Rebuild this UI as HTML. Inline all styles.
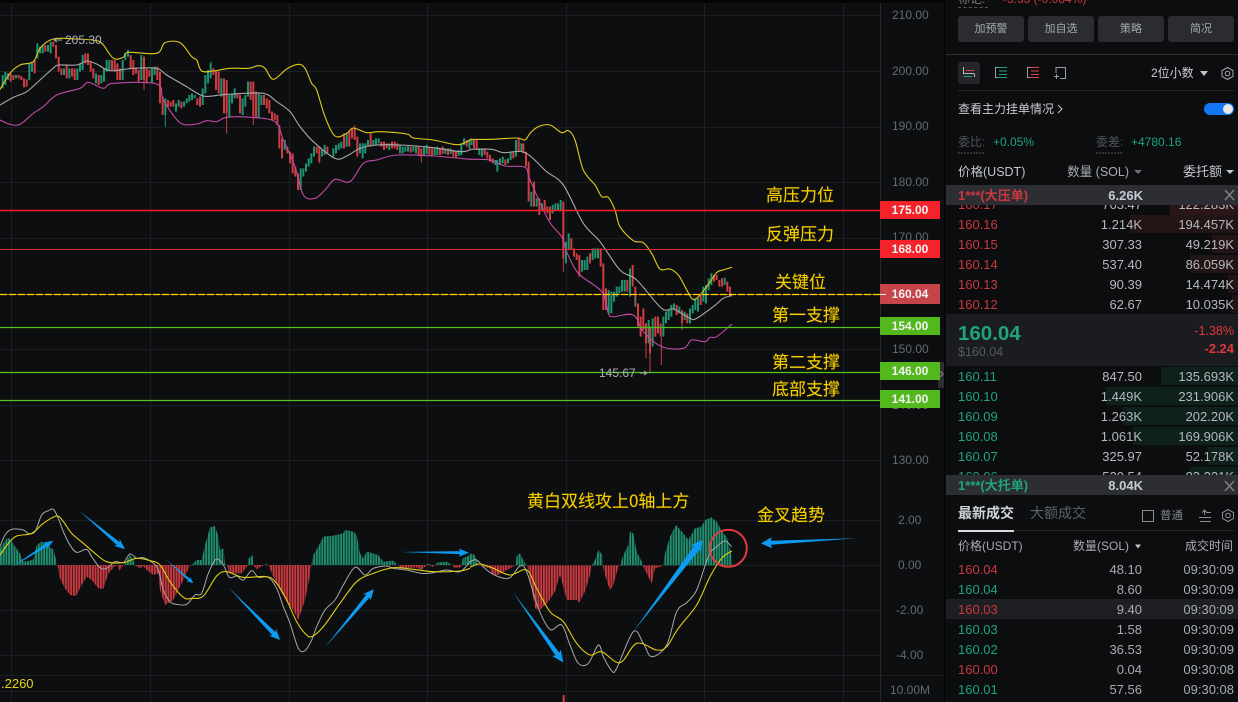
<!DOCTYPE html>
<html lang="zh">
<head>
<meta charset="utf-8">
<title>SOL/USDT</title>
<style>
html,body{margin:0;padding:0;background:#0d0e10;}
body{position:relative;width:1238px;height:702px;overflow:hidden;font-family:"Liberation Sans","Noto Sans CJK SC",sans-serif;}
body>*{filter:blur(.3px);}
svg{position:absolute;left:0;top:0;}
.t{position:absolute;white-space:nowrap;line-height:20px;height:20px;font-size:13px;color:#b5b8bc;}
.a{font-size:12px;color:#626a76;left:892px;}
.l{position:absolute;left:880px;width:60px;height:18px;line-height:18px;text-align:center;font-size:12px;font-weight:bold;color:#f2f2f2;}
.y{position:absolute;white-space:nowrap;font-family:"Noto Sans CJK SC",sans-serif;font-size:17px;line-height:24px;height:24px;color:#f7d000;text-shadow:0 0 1px #5a4a00;}
.b{position:absolute;top:16px;width:66px;height:26px;line-height:27px;background:#2a2c31;border-radius:3px;text-align:center;font-size:11px;color:#a4a8ad;}
.bar{position:absolute;height:18px;}
.sr{background:#231416;}
.gr{background:#0f211c;}
.re{color:#c8393f;}
.gn{color:#1fa37c;}
</style>
</head>
<body>
<svg width="945" height="702" viewBox="0 0 945 702" xmlns="http://www.w3.org/2000/svg">
<defs>
<pattern id="gs" width="8.1" height="10" patternUnits="userSpaceOnUse"><rect width="6" height="10" fill="#1f8f6f"/></pattern>
<pattern id="rs" width="8.1" height="10" patternUnits="userSpaceOnUse"><rect width="6" height="10" fill="#c9393f"/></pattern>
</defs>
<rect width="945" height="702" fill="#0d0e10"/>
<rect width="945" height="3" fill="#050506"/>
<g stroke="#1c1e21" stroke-width="1" fill="none">
<path d="M0 15.500H880M0 71.500H880M0 127.500H880M0 182.500H880M0 238.500H880M0 349.500H880M0 405.500H880M0 460.500H880M0 520.500H880M0 565.500H880M0 610.500H880M0 655.500H880M0 675.500H945M0 691.500H880"/>
<path d="M11.500 3V702M150.500 3V702M289.500 3V702M427.500 3V702M566.500 3V702M704.500 3V702M843.500 3V702"/>
<path d="M880.500 3V702" stroke="#24262a"/>
</g>

<!-- Candles part 1 -->
<g transform="scale(.33333)" fill="none">
<path stroke="#1f9272" stroke-width="6" d="M8 225V265M16 215V255M24 220V240M48 225V235M88 190V240M96 185V215M112 130V175M120 140V160M128 135V160M144 135V155M152 125V160M192 205V225M208 205V235M232 205V240M240 190V215M248 165V210M288 220V250M304 225V250M312 205V245M320 180V215M328 180V210M368 180V240M376 160V180M384 150V170M424 165V240M456 205V250M464 200V225M496 295V345M528 310V335M536 300V320M552 305V320M560 295V310M568 285V305M576 280V300M584 285V295M608 265V315M616 225V280M624 210V250M632 190V235M664 235V290M688 285V350M696 280V310M704 265V295M728 295V345M736 285V320M744 245V290M776 280V355M784 285V315M854 420V450M902 505V570M910 505V530M918 490V515M926 475V500M934 460V490M942 440V470M966 450V470M974 435V465M1000 445V470M1008 435V460M1016 430V450M1024 425V445M1040 400V440M1080 430V460M1088 430V475M1096 430V460M1104 420V440M1120 420V435M1128 415V435M1136 415V430M1168 430V450M1200 435V460M1208 440V460M1216 440V455M1224 438V455M1240 440V455M1248 440V460M1272 440V465M1280 435V462M1304 445V465M1312 440V465M1336 445V462M1352 445V462M1376 450V468M1384 430V465M1392 415V435M1408 420V445"/>
<path stroke="#cf3d43" stroke-width="6" d="M32 220V245M40 225V240M56 225V235M64 228V240M72 235V262M80 238V260M104 180V220M136 135V155M160 125V140M168 135V175M176 170V215M184 205V225M200 195V235M216 205V230M224 205V240M256 160V190M264 160V195M272 185V215M280 205V235M296 225V255M336 180V210M344 180V215M352 190V240M360 205V240M392 165V205M400 180V225M408 205V220M416 210V245M432 170V240M440 205V250M448 210V230M472 200V240M480 215V310M488 290V345M504 300V320M512 305V320M520 300V320M544 305V325M592 295V315M600 290V320M640 205V225M648 210V270M656 215V280M672 235V340M680 240V340M712 280V295M720 285V340M752 245V300M760 245V350M768 275V355M792 285V315M800 295V325M808 300V340M816 335V360M824 340V360M832 345V375M838 375V445M846 415V475M862 440V460M870 455V490M878 460V520M886 500V530M894 520V570M950 440V460M958 440V485M982 440V460M1032 400V445M1048 395V440M1056 385V415M1064 385V420M1072 410V470M1112 400V440M1144 425V440M1152 425V450M1160 430V445M1176 425V445M1184 425V445M1192 430V450M1232 440V458M1256 440V465M1264 445V470M1288 440V465M1296 445V468M1320 445V465M1328 440V462M1344 445V465M1360 450V470M1368 455V472M1400 420V440"/>
<path stroke="#1f9272" stroke-width="3" d="M496 345V380M633 185V210"/>
<path stroke="#cf3d43" stroke-width="3" d="M432 240V270M680 340V400M760 350V375M1264 470V488M958 485V490M1064 375V385"/>
</g>

<!-- Candles part 2 -->
<g transform="translate(470,110) scale(.33333)" fill="none">
<path stroke="#1f9272" stroke-width="6" d="M5 90V105M28 115V135M36 115V140M76 150V165M82 150V185M90 145V165M98 140V160M114 145V160M122 125V150M138 90V140M154 100V125M184 245V290M200 265V290M216 280V300M248 285V310M256 280V300M264 280V300M272 270V300M288 395V460M296 370V420M336 450V485M344 450V480M352 440V480M368 415V450M376 415V445M384 415V445M416 540V610M424 545V610M432 545V575M440 530V560M448 530V550M456 510V545M464 510V545M480 475V560M536 630V700M548 625V710M580 620V680M588 605V640M596 600V630M604 585V620M612 580V600M628 590V610M644 605V630M660 595V640M668 585V610M676 565V600M684 565V605M700 530V575M708 525V580M716 505V540M724 490V525M764 503V525"/>
<path stroke="#cf3d43" stroke-width="6" d="M12 88V115M20 90V120M44 115V135M52 125V145M60 135V155M68 145V160M106 148V165M130 125V145M146 85V125M160 100V130M168 125V170M176 155V275M192 215V290M208 265V315M224 270V305M232 290V310M240 290V330M280 275V445M304 385V420M312 415V440M320 430V450M328 435V500M360 430V460M392 415V470M400 460V600M408 535V600M472 510V545M488 465V530M496 530V590M504 580V650M512 620V680M520 595V660M528 640V700M540 650V730M556 620V680M564 620V670M572 640V680M620 585V615M636 600V640M652 610V640M692 555V585M732 495V515M740 495V510M748 510V530M756 505V530M772 515V545M780 530V560"/>
<path stroke="#cf3d43" stroke-width="3" d="M280 445V485M528 700V745M540 730V790M574 680V765M636 640V660"/>
<path stroke="#1f9272" stroke-width="3" d="M496 560V590"/>
</g>

<!-- BOLL -->
<g transform="scale(.33333)" fill="none" stroke-width="3.300" stroke-linejoin="round" stroke-linecap="round">
<polyline stroke="#e0cc1a" points="0,268 30,220 60,195 100,185 120,145 160,117 230,117 290,122 310,135 340,175 370,172 385,157 470,160 495,128 540,128 575,170 590,180 605,213 640,213 690,205 745,205 775,197 795,205 820,238 860,207 895,193 915,205 935,250 950,270 975,350 1005,408 1040,400 1060,384 1100,398 1140,395 1220,402 1240,414 1300,420 1360,433 1385,432 1410,420"/>
<polyline stroke="#a9a9a9" points="0,315 40,292 80,275 120,240 165,200 180,195 230,195 260,183 290,192 330,212 400,205 470,205 500,225 560,260 610,288 660,285 700,282 790,280 830,305 870,335 900,380 940,425 1005,475 1040,468 1080,445 1130,435 1200,435 1300,443 1380,455 1410,450"/>
<polyline stroke="#c24aa5" points="0,360 30,373 60,373 100,340 130,320 170,285 240,265 265,247 310,265 340,250 470,252 490,300 540,368 590,372 620,362 650,365 680,352 750,352 825,365 850,420 885,500 910,585 945,595 975,570 1005,538 1050,545 1090,490 1130,480 1190,465 1300,468 1410,478"/>
</g>
<g transform="translate(470,110) scale(.33333)" fill="none" stroke-width="3.300" stroke-linejoin="round" stroke-linecap="round">
<polyline stroke="#e0cc1a" points="0,88 60,88 140,84 165,90 180,70 205,50 240,45 275,68 295,62 315,90 340,180 375,225 395,260 415,262 435,300 450,350 490,392 520,398 545,430 570,477 600,477 625,495 645,530 665,565 680,565 710,530 740,488 760,480 785,472"/>
<polyline stroke="#a9a9a9" points="0,118 65,118 100,128 165,128 230,185 280,225 340,340 390,395 450,480 500,510 575,595 610,597 660,625 680,625 730,590 760,565 785,557"/>
<polyline stroke="#c24aa5" points="0,148 60,150 105,168 165,172 180,210 235,330 275,380 290,425 325,490 395,545 415,610 430,620 490,615 520,665 575,710 640,715 665,690 705,695 720,682 740,680 785,643"/>
</g>

<!-- MACD hist left -->
<g transform="translate(0,490) scale(.33333)">
<g fill="url(#gs)">
<polygon points="0,225 0,175 20,145 30,145 45,170 60,190 70,215 85,213 100,208 110,165 125,155 145,170 160,178 168,208 170,225"/>
<polygon points="372,225 378,215 390,195 400,210 405,225"/>
<polygon points="572,225 578,222 590,210 605,210 615,165 630,112 645,108 655,140 660,180 670,175 675,222 680,225"/>
<polygon points="744,225 746,205 758,195 760,225"/>
<polygon points="795,225 800,219 803,225"/>
<polygon points="934,225 940,195 955,170 970,140 1000,137 1030,130 1035,120 1060,125 1070,135 1080,190 1090,205 1100,185 1135,195 1150,215 1180,212 1192,225"/>
<polygon points="1280,225 1282,221 1295,225"/>
<polygon points="1306,225 1310,218 1340,215 1355,225"/>
<polygon points="1385,225 1388,205 1410,195 1410,225"/>
</g>
<g fill="url(#rs)">
<polygon points="172,225 180,265 195,295 210,315 228,318 245,285 260,260 275,270 295,295 310,297 325,250 345,228 353,225"/>
<polygon points="353,225 356,243 365,232 370,225"/>
<polygon points="405,225 420,235 430,228 440,240 460,255 475,250 480,300 495,345 520,330 540,290 555,260 570,225"/>
<polygon points="682,225 686,250 710,250 725,250 742,228 744,225"/>
<polygon points="760,225 770,238 785,228 792,225"/>
<polygon points="805,225 820,260 840,300 860,335 880,360 895,390 905,360 915,330 930,255 934,225"/>
<polygon points="1195,225 1200,235 1250,232 1265,240 1280,225"/>
<polygon points="1290,225 1295,232 1305,225"/>
<polygon points="1358,225 1362,233 1380,233 1385,225"/>
</g>
<g fill="none" stroke-width="3" stroke-linejoin="round">
<polyline stroke="#a8a8a8" points="0,170 15,135 35,118 70,120 85,130 105,125 125,75 145,62 160,58 175,85 190,125 210,165 230,187 260,178 275,200 300,233 320,235 345,215 370,218 390,192 410,205 430,203 460,220 475,240 490,300 510,335 530,343 560,343 585,315 605,310 625,250 648,208 670,225 688,262 710,258 730,270 755,242 775,262 805,262 830,295 850,350 870,400 895,475 915,482 935,450 950,410 975,360 1005,330 1030,285 1065,232 1095,255 1120,235 1160,228 1180,235 1220,240 1265,250 1300,248 1340,240 1380,245 1410,215"/>
<polyline stroke="#e3cf12" stroke-width="3.300" points="0,195 25,160 50,138 95,130 130,100 170,78 190,95 215,130 250,160 285,190 320,215 370,218 410,205 450,212 480,225 510,275 550,322 575,325 610,318 650,258 680,245 730,262 800,260 830,280 860,330 890,395 915,430 935,440 970,410 1020,340 1070,275 1120,250 1180,233 1240,238 1300,245 1380,243 1410,235"/>
</g>
</g>

<!-- MACD hist right -->
<g transform="translate(470,480) scale(.33333)">
<g fill="url(#gs)">
<polygon points="0,256 0,220 15,225 25,256"/>
<polygon points="136,256 140,228 150,220 165,250 172,256"/>
<polygon points="365,256 375,240 385,210 397,225 398,256"/>
<polygon points="450,256 460,225 475,195 480,155 490,160 500,215 515,245 518,256"/>
<polygon points="580,256 585,220 600,170 618,135 640,160 655,180 675,145 695,140 705,120 725,112 740,125 760,160 770,170 785,225 787,256"/>
</g>
<g fill="url(#rs)">
<polygon points="25,256 60,265 65,280 80,287 120,265 135,256"/>
<polygon points="172,256 180,300 195,385 210,390 235,365 255,335 270,285 277,310 290,360 320,360 327,368 345,335 360,285 365,256"/>
<polygon points="398,256 405,285 420,332 430,315 445,260 450,256"/>
<polygon points="518,256 530,280 545,310 555,265 578,258 578,256"/>
</g>
<g fill="none" stroke-width="3" stroke-linejoin="round">
<polyline stroke="#a8a8a8" points="0,245 20,240 50,270 85,290 120,293 150,258 170,275 205,385 240,448 275,435 300,495 325,550 355,550 385,495 400,530 425,572 440,565 490,455 520,490 545,530 590,495 620,395 650,368 680,330 715,230 740,200 765,183 785,200"/>
<polyline stroke="#e3cf12" stroke-width="3.300" points="0,262 30,252 70,265 120,285 170,270 200,325 240,395 280,425 320,490 360,525 395,515 450,548 500,490 560,510 590,500 625,445 680,375 720,290 755,235 785,213"/>
</g>
<rect x="278" y="645" width="6" height="21" fill="#cf3d43"/>
</g>

<!-- Level lines -->
<path d="M0 210.500H880" stroke="#ff1d23" stroke-width="1.600"/>
<path d="M0 249.500H880" stroke="#d92b30" stroke-width="1.100"/>
<path d="M0 294.500H880" stroke="#c9333a" stroke-width="1"/>
<path d="M0 294.500H880" stroke="#ffdc00" stroke-width="1.300" stroke-dasharray="7 2"/>
<path d="M0 327.500H880" stroke="#52c81c" stroke-width="1.200"/>
<path d="M0 372.500H880" stroke="#52c81c" stroke-width="1.200"/>
<path d="M0 400.500H880" stroke="#52c81c" stroke-width="1.200"/>

<!-- Arrows -->
<g fill="#0b9cf2">
<polygon transform="translate(11.700,567.300) rotate(-32.600)" points="0,0 41,1.600 39,4 49.400,0 39,-4 41,-1.600"/>
<polygon transform="translate(79.300,510.700) rotate(40.200)" points="0,0 51,2 49,4.500 59.800,0 49,-4.500 51,-2"/>
<polygon transform="translate(165.700,559.300) rotate(41)" points="0,0 31,1.200 30,2.800 36.600,0 30,-2.800 31,-1.200"/>
<polygon transform="translate(228.300,587.300) rotate(45.500)" points="0,0 65,2.200 63,5 73.800,0 63,-5 65,-2.200"/>
<polygon transform="translate(325,647.300) rotate(-50)" points="0,0 67,2.200 65,5 76,0 65,-5 67,-2.200"/>
<polygon transform="translate(400,552) rotate(.6)" points="0,0 60,1.500 59,4 69,0 59,-4 60,-1.500"/>
<polygon transform="translate(512.700,591.700) rotate(54.400)" points="0,0 77,2.400 75,5.500 86.900,0 75,-5.500 77,-2.400"/>
<polygon transform="translate(633.300,631.700) rotate(-52.900)" points="0,0 105,3.200 103,6.500 115,0 103,-6.500 105,-3.200"/>
<polygon transform="translate(856.700,538.300) rotate(177)" points="0,0 86,2 85,5.500 95.800,0 85,-5.500 86,-2"/>
</g>
<circle cx="728.300" cy="548.300" r="18.500" fill="none" stroke="#e33a3e" stroke-width="2"/>

<!-- Side handle -->
<rect x="938" y="362" width="7" height="26" fill="#2c2e33"/>
<path d="M940 371l3 3-3 3" fill="none" stroke="#8a8d92" stroke-width="1"/>
<rect x="944" y="0" width="2" height="702" fill="#030304"/>
<path d="M54 40h8M54 40l3-2M54 40l3 2" stroke="#a8abb0" stroke-width="1" fill="none"/>
<path d="M640 373h7M647 373l-3-2M647 373l-3 2" stroke="#a8abb0" stroke-width="1" fill="none"/>
</svg>

<!-- Axis labels -->
<div class="t a" style="top:5px">210.00</div>
<div class="t a" style="top:61px">200.00</div>
<div class="t a" style="top:116px">190.00</div>
<div class="t a" style="top:172px">180.00</div>
<div class="t a" style="top:227px">170.00</div>
<div class="t a" style="top:339px">150.00</div>
<div class="t a" style="top:395px">140.00</div>
<div class="t a" style="top:450px">130.00</div>
<div class="t a" style="top:510px;left:898px">2.00</div>
<div class="t a" style="top:555px;left:898px">0.00</div>
<div class="t a" style="top:600px;left:896px">-2.00</div>
<div class="t a" style="top:645px;left:896px">-4.00</div>
<div class="t a" style="top:680px;left:890px">10.00M</div>

<div class="l" style="top:201px;background:#f4222b">175.00</div>
<div class="l" style="top:240px;background:#f4222b">168.00</div>
<div class="l" style="top:284px;height:20px;line-height:20px;background:#c7444a">160.04</div>
<div style="position:absolute;left:880px;top:294px;width:6px;height:1px;background:#eee"></div>
<div class="l" style="top:317px;background:#52b81c">154.00</div>
<div class="l" style="top:362px;background:#52b81c">146.00</div>
<div class="l" style="top:390px;background:#52b81c">141.00</div>

<div class="t" style="left:65px;top:30px;font-size:12px;color:#b0b3b8">205.30</div>
<div class="t" style="left:599px;top:363px;font-size:12px;color:#b0b3b8">145.67</div>
<div class="t" style="left:1px;top:674px;font-size:13px;color:#e3d51c">.2260</div>

<!-- Yellow annotations -->
<div class="y" style="left:766px;top:182px">高压力位</div>
<div class="y" style="left:766px;top:221px">反弹压力</div>
<div class="y" style="left:775px;top:269px">关键位</div>
<div class="y" style="left:772px;top:302px">第一支撑</div>
<div class="y" style="left:772px;top:349px">第二支撑</div>
<div class="y" style="left:772px;top:376px">底部支撑</div>
<div class="y" style="left:527px;top:488px">黄白双线攻上0轴上方</div>
<div class="y" style="left:757px;top:502px">金叉趋势</div>

<!-- Right panel -->
<div style="position:absolute;left:946px;top:0;width:292px;height:702px;background:#0c0d0f"></div>
<div class="t" style="left:958px;top:-11px;font-size:12px;color:#777">标记:</div>
<div class="t" style="left:1003px;top:-11px;font-size:12px;color:#c8393f">-3.33 (-0.084%)</div>
<div style="position:absolute;left:958px;top:7px;width:30px;border-top:1px dashed #555"></div>

<div class="b" style="left:958px">加预警</div>
<div class="b" style="left:1028px">加自选</div>
<div class="b" style="left:1098px">策略</div>
<div class="b" style="left:1168px">简况</div>
<div style="position:absolute;left:946px;top:54px;width:292px;height:1px;background:#2a2c30"></div>

<div style="position:absolute;left:958px;top:62px;width:22px;height:22px;background:#24262a;border-radius:3px"></div>
<svg width="1238" height="702" viewBox="0 0 1238 702">
<g fill="none" stroke-width="1">
<path d="M963.500 67V73.500H974" stroke="#b5b8bc"/>
<path d="M966 70.500H974.500" stroke="#e0434a"/>
<path d="M963.500 76.500H972" stroke="#1fa37c"/>
<path d="M974.500 73.500V77" stroke="#b5b8bc"/>
<path d="M1000 67.500H995.500V77.500H1000" stroke="#9a9da2"/>
<path d="M998 67.500H1007M999 71H1007M999 74.500H1007M998 77.500H1007" stroke="#1fa37c"/>
<path d="M1032 67.500H1027.500V77.500H1032" stroke="#9a9da2"/>
<path d="M1030 67.500H1039M1031 71H1039M1031 74.500H1039M1030 77.500H1039" stroke="#e0434a"/>
<path d="M1056 73V67.500H1065.500V78.500H1060" stroke="#9a9da2"/>
<path d="M1054 76.500H1059M1056.500 74V79" stroke="#9a9da2"/>
<path d="M1200 71H1208L1204 76Z" fill="#c2c5c9" stroke="none"/>
<polygon points="1227.500,67.500 1233,70.500 1233,76.500 1227.500,79.500 1222,76.500 1222,70.500" stroke="#a8abb0"/>
<circle cx="1227.500" cy="73.500" r="2.300" stroke="#a8abb0"/>
<path d="M1058 105l4 4-4 4" stroke="#c2c5c9"/>
<path d="M1134 170H1142L1138 174Z" fill="#6e7177" stroke="none"/>
<path d="M1226 170H1234L1230 174Z" fill="#c2c5c9" stroke="none"/>
<path d="M958 153H985M1096 153H1123" stroke="#555" stroke-dasharray="2 1"/>
</g>
</svg>

<div class="t" style="left:1151px;top:63px;font-size:12px;color:#c9ccd0">2位小数</div>
<div style="position:absolute;left:958px;top:90px;width:276px;height:1px;background:#24262a"></div>
<div class="t" style="left:958px;top:99px;font-size:12px;color:#c9ccd0">查看主力挂单情况</div>
<div style="position:absolute;left:1204px;top:103px;width:30px;height:12px;border-radius:6px;background:#1277f0"></div>
<div style="position:absolute;left:1223px;top:104px;width:10px;height:10px;border-radius:5px;background:#e6e8ea"></div>

<div class="t" style="left:958px;top:132px;font-size:12px;color:#50545a">委比:</div>
<div class="t gn" style="left:993px;top:132px;font-size:12px">+0.05%</div>
<div class="t" style="left:1096px;top:132px;font-size:12px;color:#50545a">委差:</div>
<div class="t gn" style="left:1131px;top:132px;font-size:12px">+4780.16</div>

<div class="t" style="left:958px;top:162px;color:#c2c5c9;font-size:12.500px">价格(USDT)</div>
<div class="t" style="right:109px;top:162px;color:#a8abb0;font-size:12.500px">数量 (SOL)</div>
<div class="t" style="right:16px;top:162px;color:#c2c5c9">委托额</div>

<!-- Asks -->
<div class="bar sr" style="left:1170px;right:0;top:205px;background:#2a1618"></div>
<div class="bar sr" style="left:1130px;right:0;top:215px"></div>
<div class="bar sr" style="left:1212px;right:0;top:235px"></div>
<div class="bar sr" style="left:1190px;right:0;top:255px"></div>
<div class="bar sr" style="left:1228px;right:0;top:275px"></div>
<div class="bar sr" style="left:1232px;right:0;top:295px"></div>

<div class="t re" style="left:958px;top:195px">160.17</div><div class="t" style="right:96px;top:195px">763.47</div><div class="t" style="right:4px;top:195px">122.283K</div>
<div class="t re" style="left:958px;top:215px">160.16</div><div class="t" style="right:96px;top:215px">1.214K</div><div class="t" style="right:4px;top:215px">194.457K</div>
<div class="t re" style="left:958px;top:235px">160.15</div><div class="t" style="right:96px;top:235px">307.33</div><div class="t" style="right:4px;top:235px">49.219K</div>
<div class="t re" style="left:958px;top:255px">160.14</div><div class="t" style="right:96px;top:255px">537.40</div><div class="t" style="right:4px;top:255px">86.059K</div>
<div class="t re" style="left:958px;top:275px">160.13</div><div class="t" style="right:96px;top:275px">90.39</div><div class="t" style="right:4px;top:275px">14.474K</div>
<div class="t re" style="left:958px;top:295px">160.12</div><div class="t" style="right:96px;top:295px">62.67</div><div class="t" style="right:4px;top:295px">10.035K</div>

<div style="position:absolute;left:946px;top:185px;width:292px;height:20px;background:#2c2e33"></div>
<div class="t" style="left:958px;top:186px;color:#c8393f;font-weight:bold">1***(大压单)</div>
<div class="t" style="right:95px;top:186px;color:#c6cbd2;font-weight:bold">6.26K</div>
<svg width="1238" height="702" viewBox="0 0 1238 702"><path d="M1225 190L1234 200M1234 190L1225 200" stroke="#7c7f84" stroke-width="1.500" fill="none"/></svg>

<!-- Mid price -->
<div style="position:absolute;left:946px;top:314px;width:292px;height:52px;background:#1a1c20"></div>
<div class="t gn" style="left:958px;top:322px;font-size:20.500px;line-height:24px;height:24px;font-weight:bold">160.04</div>
<div class="t" style="left:958px;top:342px;font-size:12.500px;color:#55595f">$160.04</div>
<div class="t" style="right:4px;top:321px;font-size:12.500px;color:#e0353b">-1.38%</div>
<div class="t" style="right:4px;top:339px;font-size:13px;font-weight:bold;color:#e0353b">-2.24</div>

<!-- Bids -->
<div class="bar gr" style="left:1161px;right:0;top:367px"></div>
<div class="bar gr" style="left:1106px;right:0;top:387px"></div>
<div class="bar gr" style="left:1123px;right:0;top:407px"></div>
<div class="bar gr" style="left:1133px;right:0;top:427px"></div>
<div class="bar gr" style="left:1208px;right:0;top:447px"></div>
<div class="bar gr" style="left:1190px;right:0;top:467px"></div>

<div class="t gn" style="left:958px;top:367px">160.11</div><div class="t" style="right:96px;top:367px">847.50</div><div class="t" style="right:4px;top:367px">135.693K</div>
<div class="t gn" style="left:958px;top:387px">160.10</div><div class="t" style="right:96px;top:387px">1.449K</div><div class="t" style="right:4px;top:387px">231.906K</div>
<div class="t gn" style="left:958px;top:407px">160.09</div><div class="t" style="right:96px;top:407px">1.263K</div><div class="t" style="right:4px;top:407px">202.20K</div>
<div class="t gn" style="left:958px;top:427px">160.08</div><div class="t" style="right:96px;top:427px">1.061K</div><div class="t" style="right:4px;top:427px">169.906K</div>
<div class="t gn" style="left:958px;top:447px">160.07</div><div class="t" style="right:96px;top:447px">325.97</div><div class="t" style="right:4px;top:447px">52.178K</div>
<div class="t gn" style="left:958px;top:467px">160.06</div><div class="t" style="right:96px;top:467px">520.54</div><div class="t" style="right:4px;top:467px">83.321K</div>

<div style="position:absolute;left:946px;top:475px;width:292px;height:20px;background:#2c2e33"></div>
<div class="t gn" style="left:958px;top:476px;font-weight:bold">1***(大托单)</div>
<div class="t" style="right:95px;top:476px;color:#c6cbd2;font-weight:bold">8.04K</div>
<svg width="1238" height="702" viewBox="0 0 1238 702"><path d="M1225 481L1234 491M1234 481L1225 491" stroke="#7c7f84" stroke-width="1.500" fill="none"/></svg>

<!-- Trades -->
<div style="position:absolute;left:946px;top:495px;width:292px;height:207px;background:#0c0d0f"></div>
<div class="t" style="left:958px;top:503px;font-size:14px;color:#d0d3d7;font-weight:bold">最新成交</div>
<div class="t" style="left:1030px;top:503px;font-size:14px;color:#5a616c">大额成交</div>
<div class="t" style="left:1160px;top:506px;font-size:11.500px;color:#85888d">普通</div>
<div style="position:absolute;left:958px;top:530px;width:276px;height:1px;background:#26282c"></div>
<div style="position:absolute;left:958px;top:530px;width:56px;height:2px;background:#d8dadd"></div>
<svg width="1238" height="702" viewBox="0 0 1238 702" fill="none">
<rect x="1142.500" y="510.500" width="11" height="11" stroke="#8a8d92"/>
<path d="M1199 517.500H1211M1204.500 510V515M1202 512.500L1204.500 510L1207 512.500M1206 512.500H1211M1200 521.500H1211" stroke="#8a8d92"/>
<polygon points="1228,509.500 1233.500,512.500 1233.500,518.500 1228,521.500 1222.500,518.500 1222.500,512.500" stroke="#8a8d92"/>
<circle cx="1228" cy="515.500" r="2.300" stroke="#8a8d92"/>
<path d="M1135 544.500H1141L1138 548.500Z" fill="#c2c5c9"/>
</svg>
<div class="t" style="left:958px;top:536px;font-size:12px;color:#a8abb0">价格(USDT)</div>
<div class="t" style="right:109px;top:536px;font-size:12px;color:#a8abb0">数量(SOL)</div>
<div class="t" style="right:5px;top:536px;font-size:12px;color:#a8abb0">成交时间</div>

<div style="position:absolute;left:946px;top:599px;width:292px;height:20px;background:#1d1f23"></div>
<div class="t re" style="left:958px;top:560px">160.04</div><div class="t" style="right:96px;top:560px;color:#a8abaf">48.10</div><div class="t" style="right:4px;top:560px;color:#a8abaf">09:30:09</div>
<div class="t gn" style="left:958px;top:580px">160.04</div><div class="t" style="right:96px;top:580px;color:#a8abaf">8.60</div><div class="t" style="right:4px;top:580px;color:#a8abaf">09:30:09</div>
<div class="t re" style="left:958px;top:600px">160.03</div><div class="t" style="right:96px;top:600px;color:#a8abaf">9.40</div><div class="t" style="right:4px;top:600px;color:#a8abaf">09:30:09</div>
<div class="t gn" style="left:958px;top:620px">160.03</div><div class="t" style="right:96px;top:620px;color:#a8abaf">1.58</div><div class="t" style="right:4px;top:620px;color:#a8abaf">09:30:09</div>
<div class="t gn" style="left:958px;top:640px">160.02</div><div class="t" style="right:96px;top:640px;color:#a8abaf">36.53</div><div class="t" style="right:4px;top:640px;color:#a8abaf">09:30:09</div>
<div class="t re" style="left:958px;top:660px">160.00</div><div class="t" style="right:96px;top:660px;color:#a8abaf">0.04</div><div class="t" style="right:4px;top:660px;color:#a8abaf">09:30:08</div>
<div class="t gn" style="left:958px;top:680px">160.01</div><div class="t" style="right:96px;top:680px;color:#a8abaf">57.56</div><div class="t" style="right:4px;top:680px;color:#a8abaf">09:30:08</div>

<script>
document.querySelectorAll('polyline').forEach(function(p){
  var n=p.getAttribute('points').trim().split(/\s+/).map(function(s){return s.split(',').map(Number);});
  var d='M'+n[0][0]+' '+n[0][1];
  for(var i=0;i<n.length-1;i++){
    var a=n[Math.max(i-1,0)],b=n[i],c=n[i+1],e=n[Math.min(i+2,n.length-1)];
    d+='C'+(b[0]+(c[0]-a[0])/6).toFixed(1)+' '+(b[1]+(c[1]-a[1])/6).toFixed(1)+' '+(c[0]-(e[0]-b[0])/6).toFixed(1)+' '+(c[1]-(e[1]-b[1])/6).toFixed(1)+' '+c[0]+' '+c[1];
  }
  var q=document.createElementNS('http://www.w3.org/2000/svg','path');
  q.setAttribute('d',d);
  q.setAttribute('stroke',p.getAttribute('stroke'));
  var w=p.getAttribute('stroke-width');if(w)q.setAttribute('stroke-width',w);
  p.parentNode.replaceChild(q,p);
});
</script>
</body>
</html>
